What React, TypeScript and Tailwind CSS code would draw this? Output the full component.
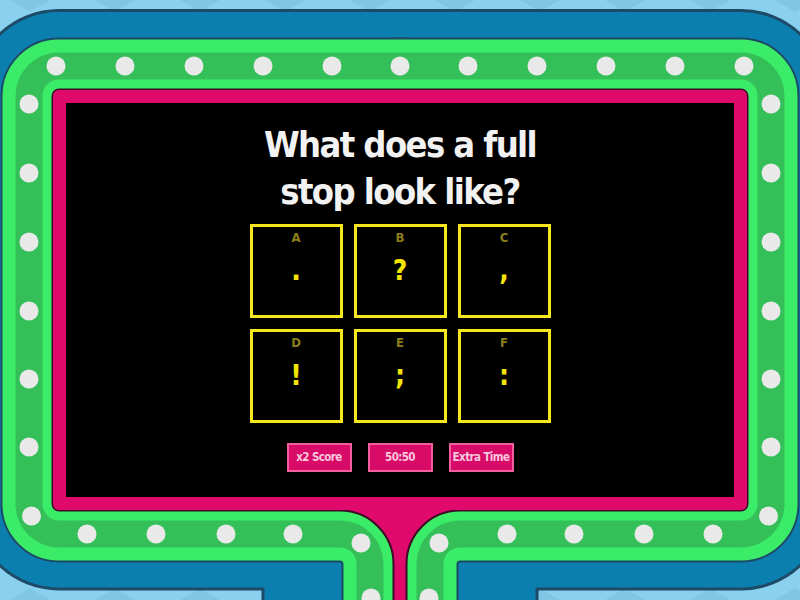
import React from "react";

const R = 30;

// left half of the frame, offset o towards the screen (o > 0 = inward)
function halfPath(o: number) {
  const r1 = R - o;
  const r2 = R + o;
  return `M 410 ${66 + o} H ${29 + R} A ${r1} ${r1} 0 0 0 ${29 + o} ${66 + R} V ${534 - R} A ${r1} ${r1} 0 0 0 ${29 + R} ${534 - o} H ${370 - R} A ${r2} ${r2} 0 0 1 ${370 + o} ${534 + R} V 640`;
}

const leftDots: [number, number][] = [
  [56, 66], [125, 66], [194, 66], [263, 66], [332, 66],
  [29, 104], [29, 173], [29, 242], [29, 311], [29, 379], [29, 447],
  [31.5, 516], [87, 534], [156, 534], [226, 534], [293, 534],
  [361, 543], [371, 598],
];

function FrameHalf() {
  return (
    <g>
      <path d={halfPath(-14.5)} stroke="#1d4a66" strokeWidth={28} fill="none" />
      <path d={halfPath(12)} stroke="#3d0b25" strokeWidth={25} fill="none" />
      <path d={halfPath(-2)} stroke="#3bec69" strokeWidth={49} fill="none" />
      <path d={halfPath(0)} stroke="#34bf59" strokeWidth={27} fill="none" />
      {leftDots.map(([x, y], i) => (
        <circle key={i} cx={x} cy={y} r={9.5} fill="#e9e9e9" />
      ))}
    </g>
  );
}

function Backdrop() {
  const spikes = [10, 95, 180, 265, 350, 435, 520, 605, 690, 775];
  return (
    <svg className="absolute inset-0" width={800} height={600} viewBox="0 0 800 600">
      <rect width={800} height={600} fill="#8ad1ef" />
      {spikes.map((x) => (
        <g key={x} fill="#80c7e5">
          <polygon points={`${x},0 ${x + 40},0 ${x + 20},12`} />
          <polygon points={`${x},600 ${x + 40},600 ${x + 20},588`} />
        </g>
      ))}
      <path
        d="M 59 10.5 H 741 A 86 86 0 0 1 827 96.5 V 503 A 86 86 0 0 1 741 589 H 537 V 620 H 263 V 589 H 59 A 86 86 0 0 1 -27 503 V 96.5 A 86 86 0 0 1 59 10.5 Z"
        fill="#0b80b0"
        stroke="#1d4a66"
        strokeWidth={3}
      />
      <rect x={345} y={495} width={110} height={120} fill="#df0a6c" />
      <FrameHalf />
      <g transform="translate(800,0) scale(-1,1)">
        <FrameHalf />
      </g>
      <circle cx={400} cy={66} r={9.5} fill="#e9e9e9" />
    </svg>
  );
}

const answers = [
  { letter: "A", mark: "." },
  { letter: "B", mark: "?" },
  { letter: "C", mark: "," },
  { letter: "D", mark: "!" },
  { letter: "E", mark: ";" },
  { letter: "F", mark: ":" },
];

const powerUps = ["x2 Score", "50:50", "Extra Time"];

export default function App() {
  return (
    <div className="relative w-[800px] h-[600px] overflow-hidden [font-family:'Liberation_Sans_Narrow','DejaVu_Sans_Condensed','Liberation_Sans',sans-serif]">
      <Backdrop />
      <div className="relative pt-[90px] pl-[53px]">
        <div className="w-[694px] h-[420px] bg-[#df0a6c] rounded-[6px] p-[13px]">
          <div className="h-full bg-black flex flex-col items-center pt-[18px]">
            <h1 className="text-[36px] leading-[47px] font-bold tracking-[-1.6px] text-[#f2f2f2] text-center">
              What does a full
              <br />
              stop look like?
            </h1>
            <div className="grid grid-cols-[93px_93px_93px] gap-x-[11px] gap-y-[11px] mt-[9px]">
              {answers.map((a) => (
                <div
                  key={a.letter}
                  className="h-[94px] border-[3px] border-[#f6e61c] flex flex-col items-center pt-[3px]"
                >
                  <span className="text-[13px] leading-[15px] font-bold text-[#8a7f17]">
                    {a.letter}
                  </span>
                  <span className="text-[28px] leading-[30px] font-bold text-[#f4e500] mt-[11px]">
                    {a.mark}
                  </span>
                </div>
              ))}
            </div>
            <div className="flex gap-[16px] mt-[20px]">
              {powerUps.map((p) => (
                <div
                  key={p}
                  className="w-[65px] h-[29px] bg-[#d90b69] border-2 border-[#f0609f] flex items-center justify-center whitespace-nowrap text-[11.5px] tracking-[-0.6px] font-bold text-[#f8c6dd]"
                >
                  {p}
                </div>
              ))}
            </div>
          </div>
        </div>
      </div>
    </div>
  );
}
